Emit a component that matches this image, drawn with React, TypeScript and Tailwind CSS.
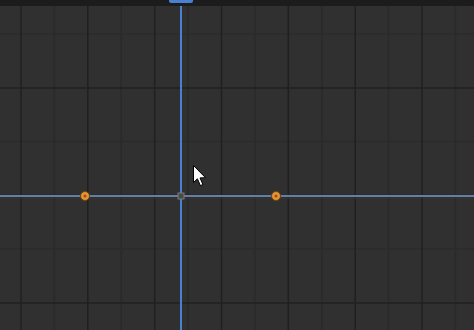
const W = 474;
const H = 324;

const majorX = [21, 87.8, 154.7, 221.5, 288.3, 355.2, 422];
const minorX = [54.4, 121.2, 188.1, 254.9, 321.8, 388.6, 455.4];
// y values are relative to the canvas (top bar is 6px)
const majorY = [82, 189.5, 297];
const minorY = [28, 135.5, 243];

const Keyframe = ({ x, y }: { x: number; y: number }) => (
  <g>
    <circle cx={x} cy={y} r={4.5} fill="#e39530" stroke="#6b4312" strokeWidth={1} />
    <circle cx={x} cy={y} r={1.5} fill="#a8452e" />
  </g>
);

const GraphCanvas = () => (
  <svg width={W} height={H} viewBox={`0 0 ${W} ${H}`} className="block">
    <rect width={W} height={H} fill="#303030" />
    {minorX.map((x) => (
      <line key={`mx${x}`} x1={x} y1={0} x2={x} y2={H} stroke="#2a2a2a" strokeWidth={1.5} />
    ))}
    {minorY.map((y) => (
      <line key={`my${y}`} x1={0} y1={y} x2={W} y2={y} stroke="#2b2b2b" strokeWidth={1.5} />
    ))}
    {majorX.map((x) => (
      <line key={`Mx${x}`} x1={x} y1={0} x2={x} y2={H} stroke="#202020" strokeWidth={1.5} />
    ))}
    {majorY.map((y) => (
      <line key={`My${y}`} x1={0} y1={y} x2={W} y2={y} stroke="#202020" strokeWidth={1.5} />
    ))}

    {/* curve shadow */}
    <line x1={0} y1={192.5} x2={W} y2={192.5} stroke="#3b3030" strokeWidth={1} />
    {/* horizontal curve */}
    <line x1={0} y1={190} x2={W} y2={190} stroke="#6080a8" strokeWidth={2} />
    {/* playhead */}
    <line x1={181} y1={0} x2={181} y2={H} stroke="#4a80d2" strokeWidth={2} />

    <rect x={178} y={187} width={6} height={6} fill="#4a4a4a" stroke="#7a7a7a" strokeWidth={1} />
    <Keyframe x={85} y={190} />
    <Keyframe x={276} y={190} />

    {/* mouse pointer */}
    <path
      d="M193.5 159.5 L193.5 176.5 L197.4 172.8 L200.4 179.6 L202.9 178.5 L200 171.9 L205.5 171.7 Z"
      fill="#ffffff"
      stroke="#000000"
      strokeWidth={1}
      strokeLinejoin="round"
    />
  </svg>
);

export default function App() {
  return (
    <div className="w-[474px] h-[330px] bg-[#303030] flex flex-col overflow-hidden">
      <div className="h-[6px] bg-[#1c1c1c] relative shrink-0">
        <div className="absolute left-[169px] top-0 w-[24px] h-[3px] rounded-b-[2px] bg-[#4a80d2]" />
      </div>
      <GraphCanvas />
    </div>
  );
}
